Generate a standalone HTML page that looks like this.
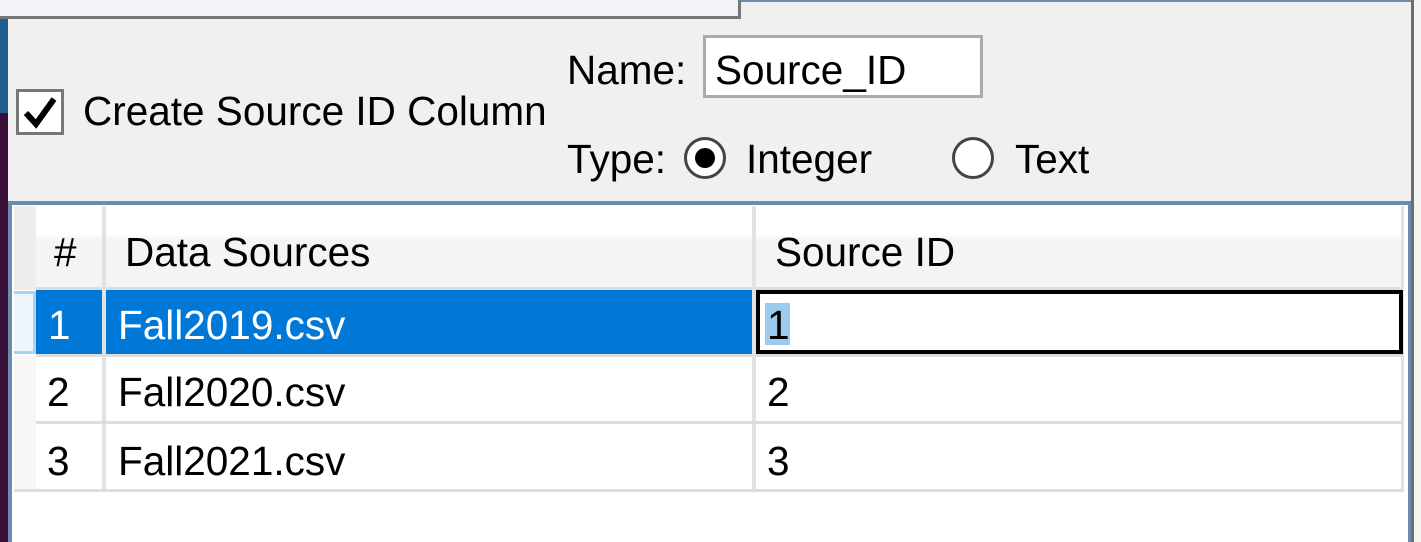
<!DOCTYPE html>
<html><head><style>
*{margin:0;padding:0;box-sizing:border-box}
body{width:1421px;height:542px;overflow:hidden;background:#f0f0f0;font-family:"Liberation Sans",sans-serif;color:#000;position:relative}
.a{position:absolute}
.t{font-size:40.5px;white-space:nowrap;letter-spacing:0}
</style></head><body>
<div class="a" style="left:0;top:0;width:8px;height:113px;background:#1f5f8f"></div>
<div class="a" style="left:0;top:113px;width:8px;height:429px;background:#3a0f3a"></div>
<div class="a" style="left:1413px;top:0;width:8px;height:542px;background:#f4f4f4"></div>
<div class="a" style="left:1411px;top:0;width:3px;height:542px;background:#6e6e6e"></div>
<div class="a" style="left:740px;top:0;width:671px;height:2px;background:#6a8cae"></div>
<div class="a" style="left:0;top:0;width:741px;height:19px;background:#f2f3f7;border-right:3px solid #777;border-bottom:3px solid #777"></div>

<div class="a" style="left:16px;top:89px;width:48px;height:46px;border:3px solid #777;background:#fff"></div>
<svg class="a" style="left:16px;top:89px" width="48" height="46"><path d="M10 24 L20 35 L38 10" stroke="#000" stroke-width="6" fill="none"/></svg>
<div class="a t" style="left:83px;top:88px">Create Source ID Column</div>
<div class="a t" style="left:567px;top:47px">Name:</div>
<div class="a" style="left:703px;top:35px;width:280px;height:63px;border:3px solid #aaa;background:#fff"></div>
<div class="a t" style="left:715px;top:47px">Source_ID</div>
<div class="a t" style="left:567px;top:136px">Type:</div>
<div class="a" style="left:684px;top:137px;width:42px;height:42px;border:3px solid #444;border-radius:50%;background:#fff"></div>
<div class="a" style="left:695px;top:148px;width:20px;height:20px;border-radius:50%;background:#000"></div>
<div class="a t" style="left:746px;top:136px">Integer</div>
<div class="a" style="left:952px;top:137px;width:42px;height:42px;border:3px solid #444;border-radius:50%;background:#fff"></div>
<div class="a t" style="left:1015px;top:136px">Text</div>

<div class="a" style="left:8px;top:201px;width:1403px;height:341px;background:#6a8cae"></div>
<div class="a" style="left:12px;top:205px;width:1396px;height:337px;background:#fff"></div>
<div class="a" style="left:14px;top:206px;width:22px;height:84px;background:#eee"></div>
<div class="a" style="left:36px;top:206px;width:1367px;height:82px;background:linear-gradient(#fff 0,#fff 35%,#f3f4f6 40%,#f3f4f6 100%)"></div>
<div class="a" style="left:36px;top:287px;width:1367px;height:3px;background:#ddd"></div>
<div class="a" style="left:102px;top:206px;width:4px;height:286px;background:#e2e2e2"></div>
<div class="a" style="left:752px;top:206px;width:4px;height:286px;background:#e2e2e2"></div>
<div class="a" style="left:1401px;top:206px;width:3px;height:286px;background:#e2e2e2"></div>
<div class="a t" style="left:54px;top:229px">#</div>
<div class="a t" style="left:125px;top:229px">Data Sources</div>
<div class="a t" style="left:775px;top:229px">Source ID</div>
<div class="a" style="left:14px;top:291px;width:22px;height:63px;background:#eef6fc;border-right:3px solid #a8d4f4;border-bottom:3px solid #a8d4f4;border-top:3px solid #a8d4f4"></div>
<div class="a" style="left:14px;top:356px;width:22px;height:136px;background:#f7f7f7"></div>
<div class="a" style="left:36px;top:290px;width:66px;height:64px;background:#0078d7"></div>
<div class="a" style="left:106px;top:290px;width:646px;height:64px;background:#0078d7"></div>
<div class="a" style="left:756px;top:290px;width:647px;height:64px;border:4px solid #000;background:#fff"></div>
<div class="a" style="left:765px;top:303px;width:25px;height:42px;background:#9ccbf0"></div>
<div class="a t" style="left:48px;top:302px;color:#fff">1</div>
<div class="a t" style="left:118px;top:302px;color:#fff">Fall2019.csv</div>
<div class="a t" style="left:767px;top:302px">1</div>
<div class="a" style="left:36px;top:354px;width:1367px;height:3px;background:#ddd"></div>
<div class="a" style="left:36px;top:421px;width:1367px;height:3px;background:#ddd"></div>
<div class="a" style="left:14px;top:489px;width:1389px;height:3px;background:#ddd"></div>
<div class="a t" style="left:47px;top:369px">2</div>
<div class="a t" style="left:118px;top:369px">Fall2020.csv</div>
<div class="a t" style="left:767px;top:369px">2</div>
<div class="a t" style="left:47px;top:438px">3</div>
<div class="a t" style="left:118px;top:438px">Fall2021.csv</div>
<div class="a t" style="left:767px;top:438px">3</div>
</body></html>
